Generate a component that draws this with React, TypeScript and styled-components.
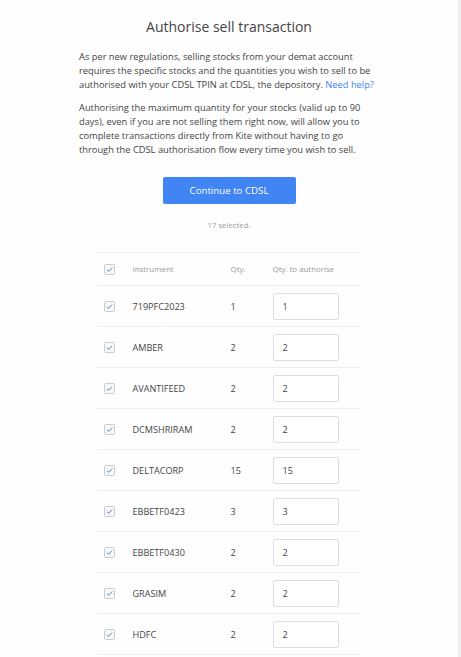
import React from "react";
import styled, { createGlobalStyle } from "styled-components";

const HOLDINGS = [
  { symbol: "719PFC2023", qty: 1 },
  { symbol: "AMBER", qty: 2 },
  { symbol: "AVANTIFEED", qty: 2 },
  { symbol: "DCMSHRIRAM", qty: 2 },
  { symbol: "DELTACORP", qty: 15 },
  { symbol: "EBBETF0423", qty: 3 },
  { symbol: "EBBETF0430", qty: 2 },
  { symbol: "GRASIM", qty: 2 },
  { symbol: "HDFC", qty: 2 }
];

const GlobalStyle = createGlobalStyle`
  html, body {
    margin: 0;
    padding: 0;
    background: #fefefe;
    height: 657px;
    overflow: hidden;
  }
  * {
    box-sizing: border-box;
  }
`;

const Page = styled.div`
  display: flex;
  height: 657px;
  font-family: "Open Sans", "Liberation Sans", sans-serif;
  color: #444444;
`;

const Main = styled.div`
  flex: 1;
  display: flex;
  flex-direction: column;
  align-items: center;
`;

const ScrollTrack = styled.div`
  width: 3px;
  background: #efefef;
`;

const Content = styled.div`
  width: 300px;
  padding-top: 17px;
  display: flex;
  flex-direction: column;
  align-items: center;
`;

const Title = styled.h1`
  margin: 0 0 13px 0;
  font-size: 14px;
  line-height: 20px;
  font-weight: normal;
  color: #444444;
  text-align: center;
`;

const Paragraph = styled.p`
  margin: 0 0 9px 0;
  width: 100%;
  font-size: 9.3px;
  line-height: 14px;
  color: #444444;
`;

const HelpLink = styled.a`
  color: #4184f3;
  text-decoration: none;
`;

const Button = styled.button`
  margin-top: 11px;
  width: 133px;
  height: 27px;
  border: none;
  border-radius: 2px;
  background: #4184f3;
  color: #ffffff;
  font-family: inherit;
  font-size: 9.7px;
  cursor: pointer;
`;

const Selected = styled.div`
  margin-top: 15px;
  font-size: 7.8px;
  line-height: 12px;
  color: #9b9b9b;
`;

const Table = styled.div`
  margin-top: 21px;
  width: 263px;
  margin-left: -2px;
  border-top: 1px solid #eeeeee;
`;

const Row = styled.div<{ header?: boolean }>`
  display: grid;
  grid-template-columns: 36px 98px 42px 1fr;
  align-items: center;
  height: ${props => (props.header ? 33 : 41)}px;
  border-bottom: 1px solid #eeeeee;
  font-size: ${props => (props.header ? 7.9 : 9.1)}px;
  color: ${props => (props.header ? "#9b9b9b" : "#444444")};
`;

const CheckCell = styled.div`
  display: flex;
  padding-left: 7px;
`;

const QtyInput = styled.div`
  width: 66px;
  height: 27px;
  border: 1px solid #dddddd;
  border-radius: 2px;
  padding-left: 9px;
  display: flex;
  align-items: center;
  font-size: 9.1px;
  color: #444444;
  background: #ffffff;
`;

const CheckBox = () => (
  <svg width="11" height="11" viewBox="0 0 11 11">
    <rect x="0.5" y="0.5" width="10" height="10" rx="1" fill="#f7f7f7" stroke="#cccccc" />
    <path d="M2.9 5.7 L4.7 7.3 L8.1 3.7" fill="none" stroke="#4f86d6" strokeWidth="1" />
  </svg>
);

const App = () => (
  <Page>
    <GlobalStyle />
    <Main>
      <Content>
        <Title>Authorise sell transaction</Title>
        <Paragraph>
          As per new regulations, selling stocks from your demat account
          requires the specific stocks and the quantities you wish to sell to
          be authorised with your CDSL TPIN at CDSL, the depository.{" "}
          <HelpLink href="#">Need help?</HelpLink>
        </Paragraph>
        <Paragraph>
          Authorising the maximum quantity for your stocks (valid up to 90
          days), even if you are not selling them right now, will allow you to
          complete transactions directly from Kite without having to go
          through the CDSL authorisation flow every time you wish to sell.
        </Paragraph>
        <Button>Continue to CDSL</Button>
        <Selected>17 selected.</Selected>
        <Table>
          <Row header>
            <CheckCell>
              <CheckBox />
            </CheckCell>
            <div>Instrument</div>
            <div>Qty.</div>
            <div>Qty. to authorise</div>
          </Row>
          {HOLDINGS.map(h => (
            <Row key={h.symbol}>
              <CheckCell>
                <CheckBox />
              </CheckCell>
              <div>{h.symbol}</div>
              <div>{h.qty}</div>
              <QtyInput>{h.qty}</QtyInput>
            </Row>
          ))}
        </Table>
      </Content>
    </Main>
    <ScrollTrack />
  </Page>
);

export default App;
